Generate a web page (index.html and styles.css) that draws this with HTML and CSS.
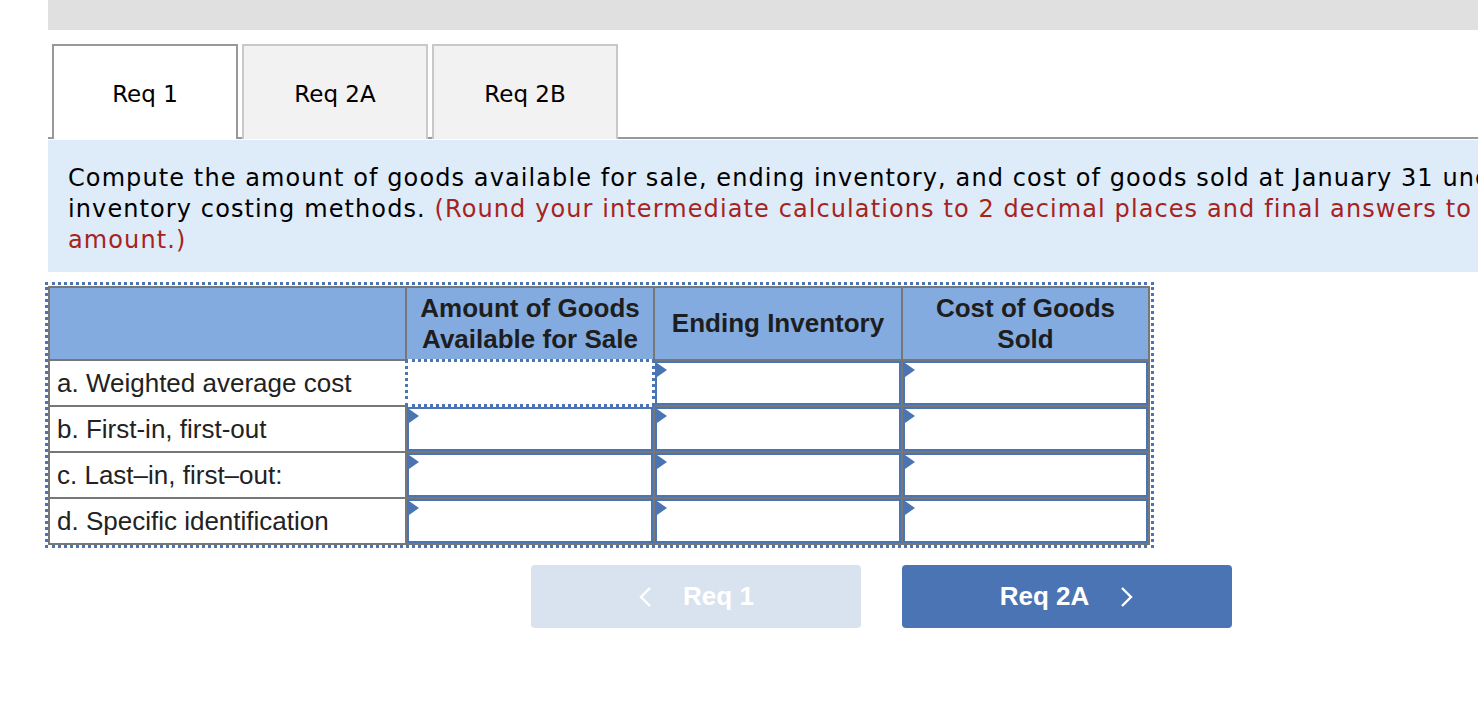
FILE: index.html
```html
<!DOCTYPE html>
<html>
<head>
<meta charset="utf-8">
<link rel="stylesheet" href="styles.css">
</head>
<body>
<div class="page">
  <div class="topbar"></div>
  <div class="tabs">
    <div class="tab active">Req 1</div>
    <div class="tab">Req 2A</div>
    <div class="tab">Req 2B</div>
  </div>
  <div class="instructions">
    Compute the amount of goods available for sale, ending inventory, and cost of goods sold at January 31 under each of the following<br>
    inventory costing methods. <span class="hint">(Round your intermediate calculations to 2 decimal places and final answers to the nearest whole dollar<br>amount.)</span>
  </div>
  <div class="table-wrap">
    <table class="grid">
      <thead>
        <tr>
          <th class="c1"></th>
          <th class="c2">Amount of Goods<br>Available for Sale</th>
          <th class="c3">Ending Inventory</th>
          <th class="c4">Cost of Goods<br>Sold</th>
        </tr>
      </thead>
      <tbody>
        <tr>
          <td class="label">a. Weighted average cost</td>
          <td class="in"><div class="field focus"></div></td>
          <td class="in"><div class="field"></div></td>
          <td class="in"><div class="field"></div></td>
        </tr>
        <tr>
          <td class="label">b. First-in, first-out</td>
          <td class="in"><div class="field"></div></td>
          <td class="in"><div class="field"></div></td>
          <td class="in"><div class="field"></div></td>
        </tr>
        <tr>
          <td class="label">c. Last–in, first–out:</td>
          <td class="in"><div class="field"></div></td>
          <td class="in"><div class="field"></div></td>
          <td class="in"><div class="field"></div></td>
        </tr>
        <tr>
          <td class="label">d. Specific identification</td>
          <td class="in"><div class="field"></div></td>
          <td class="in"><div class="field"></div></td>
          <td class="in"><div class="field"></div></td>
        </tr>
      </tbody>
    </table>
  </div>
  <div class="nav">
    <button class="btn disabled"><svg class="chev" width="14" height="22" viewBox="0 0 14 22"><polyline points="12,2 3,11 12,20" fill="none" stroke="#fff" stroke-width="2.4"/></svg><span>Req 1</span></button>
    <button class="btn primary"><span>Req 2A</span><svg class="chev" width="14" height="22" viewBox="0 0 14 22"><polyline points="2,2 11,11 2,20" fill="none" stroke="#fff" stroke-width="2.4"/></svg></button>
  </div>
</div>
</body>
</html>
```

FILE: styles.css
```css
html, body {
  margin: 0;
  padding: 0;
  overflow: hidden;
  background: #fff;
}
body {
  font-family: "DejaVu Sans", Verdana, sans-serif;
  width: 1478px;
  height: 708px;
}
.page {
  width: 1667px;
  margin-left: 48px;
}
.topbar {
  height: 30px;
  background: #e0e0e0;
}
.tabs {
  display: flex;
  gap: 4px;
  margin-top: 14px;
  padding-left: 4px;
  height: 95px;
  border-bottom: 2px solid #999;
  box-sizing: border-box;
  align-items: flex-start;
}
.tab {
  width: 186px;
  height: 95px;
  box-sizing: border-box;
  border: 2px solid #c8c8c8;
  border-bottom: none;
  background: #f2f2f2;
  display: flex;
  align-items: center;
  justify-content: center;
  padding-top: 2px;
  font-size: 23px;
  color: #000;
}
.tab.active {
  background: #fff;
  border-color: #999;
}
.instructions {
  margin-top: 1px;
  background: #deebf8;
  padding: 23px 20px 16px;
  font-size: 24px;
  letter-spacing: 1.1px;
  line-height: 31px;
  color: #000;
  white-space: nowrap;
}
.hint {
  color: #a6231e;
}
.table-wrap {
  display: inline-block;
  margin-top: 10px;
  margin-left: -3px;
  border: 3px dotted #4a74b4;
  padding: 1px 1px 0 0;
}
.grid {
  border-collapse: collapse;
  font-family: "Liberation Sans", Arial, sans-serif;
  color: #222;
}
.grid th, .grid td {
  border: 2px solid #777;
  padding: 0;
}
.grid th {
  background: #83abe0;
  height: 71px;
  font-size: 26px;
  line-height: 31px;
  font-weight: bold;
  text-align: center;
  color: #1e1e1e;
}
.c1 { width: 355px; }
.c2 { width: 246px; }
.c3 { width: 246px; }
.c4 { width: 245px; }
.grid td {
  height: 44px;
}
.label {
  font-size: 26px;
  padding-left: 7px !important;
  text-align: left;
  padding-top: 1px !important;
  box-sizing: border-box;
}
.in {
  vertical-align: top;
}
.field {
  position: relative;
  box-sizing: border-box;
  height: 44px;
  border: 2px solid #4a74b4;
  background: #fff;
}
.field::before {
  content: "";
  position: absolute;
  left: 0;
  top: 0;
  border-left: 10px solid #4a74b4;
  border-top: 7px solid transparent;
  border-bottom: 7px solid transparent;
}
.field.focus {
  border: 3px dotted #4a74b4;
  margin: -2px;
  height: 48px;
  z-index: 1;
}
.field.focus::before {
  display: none;
}
.nav {
  display: flex;
  justify-content: center;
  gap: 41px;
  margin-top: 13px;
}
.btn {
  width: 330px;
  height: 63px;
  border: none;
  border-radius: 4px;
  color: #fff;
  font-family: "Liberation Sans", Arial, sans-serif;
  font-weight: bold;
  font-size: 26px;
  display: flex;
  align-items: center;
  justify-content: center;
  gap: 31px;
  padding: 0;
}
.btn.disabled {
  background: #d9e3ef;
}
.btn.primary {
  background: #4a74b4;
}
.chev {
  display: block;
}
```
